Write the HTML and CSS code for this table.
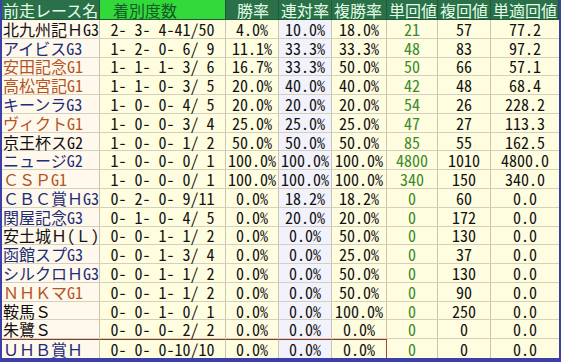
FILE: index.html
```html
<!DOCTYPE html>
<html lang="ja">
<head>
<meta charset="utf-8">
<link rel="stylesheet" href="styles.css">
</head>
<body>
<div class="frame">
  <div class="grid">
    <div class="row head">
      <div class="c name">前走レース名</div>
      <div class="c rec hl">着別度数</div>
      <div class="c p1">勝率</div>
      <div class="c">連対率</div>
      <div class="c">複勝率</div>
      <div class="c">単回値</div>
      <div class="c">複回値</div>
      <div class="c">単適回値</div>
    </div>
    <div class="row"><div class="c name k">北九州記Ｈ<span class="hw">G3</span></div><div class="c rec">2- 3- 4-41/50</div><div class="c pct">4.0%</div><div class="c pct ren">10.0%</div><div class="c pct">18.0%</div><div class="c num win">21</div><div class="c num">57</div><div class="c num">77.2</div></div>
    <div class="row"><div class="c name b">アイビス<span class="hw">G3</span></div><div class="c rec">1- 2- 0- 6/ 9</div><div class="c pct">11.1%</div><div class="c pct ren">33.3%</div><div class="c pct">33.3%</div><div class="c num win">48</div><div class="c num">83</div><div class="c num">97.2</div></div>
    <div class="row"><div class="c name g1">安田記念<span class="hw">G1</span></div><div class="c rec">1- 1- 1- 3/ 6</div><div class="c pct">16.7%</div><div class="c pct ren">33.3%</div><div class="c pct">50.0%</div><div class="c num win">50</div><div class="c num">66</div><div class="c num">57.1</div></div>
    <div class="row"><div class="c name g1">高松宮記<span class="hw">G1</span></div><div class="c rec">1- 1- 0- 3/ 5</div><div class="c pct">20.0%</div><div class="c pct ren">40.0%</div><div class="c pct">40.0%</div><div class="c num win">42</div><div class="c num">48</div><div class="c num">68.4</div></div>
    <div class="row"><div class="c name b">キーンラ<span class="hw">G3</span></div><div class="c rec">1- 0- 0- 4/ 5</div><div class="c pct">20.0%</div><div class="c pct ren">20.0%</div><div class="c pct">20.0%</div><div class="c num win">54</div><div class="c num">26</div><div class="c num">228.2</div></div>
    <div class="row"><div class="c name g1">ヴィクト<span class="hw">G1</span></div><div class="c rec">1- 0- 0- 3/ 4</div><div class="c pct">25.0%</div><div class="c pct ren">25.0%</div><div class="c pct">25.0%</div><div class="c num win">47</div><div class="c num">27</div><div class="c num">113.3</div></div>
    <div class="row"><div class="c name k">京王杯ス<span class="hw">G2</span></div><div class="c rec">1- 0- 0- 1/ 2</div><div class="c pct">50.0%</div><div class="c pct ren">50.0%</div><div class="c pct">50.0%</div><div class="c num win">85</div><div class="c num">55</div><div class="c num">162.5</div></div>
    <div class="row"><div class="c name b">ニュージ<span class="hw">G2</span></div><div class="c rec">1- 0- 0- 0/ 1</div><div class="c pct">100.0%</div><div class="c pct ren">100.0%</div><div class="c pct">100.0%</div><div class="c num win">4800</div><div class="c num">1010</div><div class="c num">4800.0</div></div>
    <div class="row"><div class="c name g1">ＣＳＰ<span class="hw">G1</span></div><div class="c rec">1- 0- 0- 0/ 1</div><div class="c pct">100.0%</div><div class="c pct ren">100.0%</div><div class="c pct">100.0%</div><div class="c num win">340</div><div class="c num">150</div><div class="c num">340.0</div></div>
    <div class="row"><div class="c name b">ＣＢＣ賞Ｈ<span class="hw">G3</span></div><div class="c rec">0- 2- 0- 9/11</div><div class="c pct">0.0%</div><div class="c pct ren">18.2%</div><div class="c pct">18.2%</div><div class="c num win">0</div><div class="c num">60</div><div class="c num">0.0</div></div>
    <div class="row"><div class="c name b">関屋記念<span class="hw">G3</span></div><div class="c rec">0- 1- 0- 4/ 5</div><div class="c pct">0.0%</div><div class="c pct ren">20.0%</div><div class="c pct">20.0%</div><div class="c num win">0</div><div class="c num">172</div><div class="c num">0.0</div></div>
    <div class="row"><div class="c name k">安土城Ｈ<span class="hw">(</span>Ｌ<span class="hw">)</span></div><div class="c rec">0- 0- 1- 1/ 2</div><div class="c pct">0.0%</div><div class="c pct ren">0.0%</div><div class="c pct">50.0%</div><div class="c num win">0</div><div class="c num">130</div><div class="c num">0.0</div></div>
    <div class="row"><div class="c name b">函館スプ<span class="hw">G3</span></div><div class="c rec">0- 0- 1- 3/ 4</div><div class="c pct">0.0%</div><div class="c pct ren">0.0%</div><div class="c pct">25.0%</div><div class="c num win">0</div><div class="c num">37</div><div class="c num">0.0</div></div>
    <div class="row"><div class="c name b">シルクロＨ<span class="hw">G3</span></div><div class="c rec">0- 0- 1- 1/ 2</div><div class="c pct">0.0%</div><div class="c pct ren">0.0%</div><div class="c pct">50.0%</div><div class="c num win">0</div><div class="c num">130</div><div class="c num">0.0</div></div>
    <div class="row"><div class="c name g1">ＮＨＫマ<span class="hw">G1</span></div><div class="c rec">0- 0- 1- 1/ 2</div><div class="c pct">0.0%</div><div class="c pct ren">0.0%</div><div class="c pct">50.0%</div><div class="c num win">0</div><div class="c num">90</div><div class="c num">0.0</div></div>
    <div class="row"><div class="c name k">鞍馬Ｓ</div><div class="c rec">0- 0- 1- 0/ 1</div><div class="c pct">0.0%</div><div class="c pct ren">0.0%</div><div class="c pct">100.0%</div><div class="c num win">0</div><div class="c num">250</div><div class="c num">0.0</div></div>
    <div class="row"><div class="c name k">朱鷺Ｓ</div><div class="c rec">0- 0- 0- 2/ 2</div><div class="c pct">0.0%</div><div class="c pct ren">0.0%</div><div class="c pct">0.0%</div><div class="c num win">0</div><div class="c num">0</div><div class="c num">0.0</div></div>
    <div class="row last"><div class="c name b">ＵＨＢ賞Ｈ</div><div class="c rec">0- 0- 0-10/10</div><div class="c pct">0.0%</div><div class="c pct ren">0.0%</div><div class="c pct">0.0%</div><div class="c num win">0</div><div class="c num">0</div><div class="c num">0.0</div></div>
  </div>
</div>
</body>
</html>
```
FILE: styles.css
```css
html, body {
  margin: 0;
  padding: 0;
  background: #ffffff;
}
.frame {
  width: 561px;
  height: 362px;
  box-sizing: border-box;
  border-left: 2px solid #3b3fa8;
  border-right: 2px solid #3b3fa8;
  border-bottom: 4px solid #3b3fa8;
  overflow: hidden;
}
.grid {
  display: grid;
  height: 358px;
  grid-template-columns: 98px 126px 53px 53px 55px 51px 53px 68px;
  grid-template-rows: 20px repeat(18, 1fr);
  font-family: "Noto Sans CJK JP", sans-serif;
  font-size: 16px;
  color: #111;
}
.row { display: contents; }
.c {
  box-sizing: border-box;
  display: flex;
  align-items: center;
  justify-content: center;
  border-right: 1px solid #c9c5b0;
  border-bottom: 1px solid #d4d0bc;
  background: #fffde0;
  line-height: 1;
  white-space: pre;
  font-feature-settings: "hwid";
}
.c:nth-child(8) { border-right: none; }
.c.name {
  background: #fff8ec;
  justify-content: flex-start;
  padding-left: 1px;
  font-feature-settings: normal;
}
.hw { font-feature-settings: "hwid"; }
.c.ren { background: #f2f2fc; }
.win { color: #3a8a2a; }
.k { color: #111; }
.b { color: #1c2c78; }
.g1 { color: #b4541e; }
.last .c { border-bottom: none; }
.last .c:nth-child(-n+5) {
  border-top: 1px solid #8a3a2a;
}
.last .c:nth-child(5) { border-right: 1px solid #b04030; }
.head .c {
  background: #2a7048;
  color: #e4ffe8;
  justify-content: flex-start;
  padding-left: 2px;
  border-right: 1px solid #1d5a38;
  border-bottom: 1px solid #1d5a38;
}
.head .c.hl {
  background: #33d93a;
  color: #145a28;
  padding-left: 13px;
}
.head .c.p1 { padding-left: 11px; }
.head .c.name { padding-left: 1px; }
```
